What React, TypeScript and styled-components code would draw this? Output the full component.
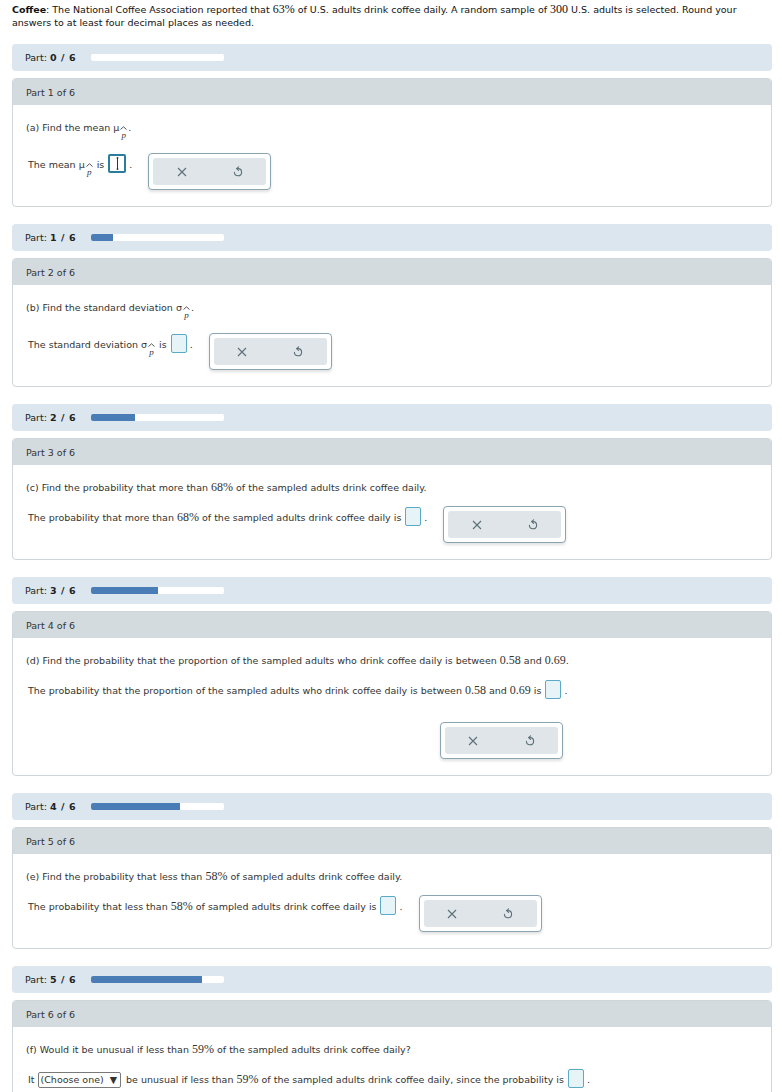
import React from 'react';
import styled, { createGlobalStyle } from 'styled-components';

const GlobalStyle = createGlobalStyle`
	body {
		margin: 0;
		background: #ffffff;
		font-family: 'DejaVu Sans', Verdana, sans-serif;
		font-size: 9.5px;
		color: #222222;
	}
`;

const Page = styled.div`
	padding: 3px 10px 0 12px;
`;

const Intro = styled.div`
	line-height: 13px;
	color: #111111;
	margin-bottom: 15px;
	b {
		font-weight: bold;
	}
`;

const Num = styled.span`
	font-family: 'Liberation Serif', 'Times New Roman', serif;
	font-size: 12px;
	line-height: 10px;
`;

const ProgressWrap = styled.div`
	height: 27px;
	background: #dbe6ef;
	border-radius: 4px;
	display: flex;
	align-items: center;
	padding-left: 13px;
	margin-bottom: 7px;
`;

const ProgressLabel = styled.div`
	min-width: 66px;
	color: #222222;
	b {
		font-weight: bold;
		letter-spacing: 0.6px;
	}
`;

const Track = styled.div`
	width: 133px;
	height: 7px;
	background: #ffffff;
	border-radius: 2px;
	overflow: hidden;
`;

const Fill = styled.div`
	height: 100%;
	background: #4a7db6;
`;

const Card = styled.div`
	border: 1px solid #cdd6da;
	border-radius: 4px;
	overflow: hidden;
	margin-bottom: 17px;
`;

const CardHead = styled.div`
	height: 26px;
	background: #d3dbde;
	display: flex;
	align-items: center;
	padding-left: 13px;
	color: #333333;
`;

const CardBody = styled.div`
	padding: 16px 13px 16px 13px;
`;

const Question = styled.div<{ sub?: boolean }>`
	height: ${(p) => (p.sub ? '21px' : '14px')};
	line-height: 14px;
	color: #333333;
	white-space: nowrap;
`;

const AnswerBlock = styled.div<{ wrap?: boolean }>`
	margin-top: 11px;
	padding-left: 2px;
	display: flex;
	flex-direction: ${(p) => (p.wrap ? 'column' : 'row')};
	align-items: flex-start;
`;

const AnswerLine = styled.div`
	display: flex;
	align-items: flex-start;
	color: #333333;
`;

const AnswerText = styled.span`
	margin-top: 5px;
	line-height: 14px;
	white-space: nowrap;
`;

const InputBox = styled.span<{ focused?: boolean }>`
	display: flex;
	align-items: center;
	justify-content: center;
	box-sizing: border-box;
	width: ${(p) => (p.focused ? '18px' : '16px')};
	height: 19px;
	margin: 1px 3px 0 4px;
	border: ${(p) => (p.focused ? '2px solid #2b7d9c' : '1px solid #5aa9c6')};
	background: ${(p) => (p.focused ? '#ffffff' : '#e6f4f8')};
	border-radius: 2px;
`;

const ActionBox = styled.div<{ offset?: number; below?: boolean }>`
	box-sizing: border-box;
	width: 123px;
	height: 37px;
	margin-left: ${(p) => p.offset ?? 16}px;
	margin-top: ${(p) => (p.below ? '23px' : '0')};
	border: 1px solid #8aa5b1;
	border-radius: 4px;
	background: #ffffff;
	padding: 4px;
	box-shadow: 0 2px 3px rgba(0, 0, 0, 0.12);
	display: flex;
`;

const ActionInner = styled.div`
	flex: 1;
	display: flex;
	background: #dfe5e8;
	border-radius: 3px;
`;

const ActionButton = styled.button`
	flex: 1;
	border: none;
	background: transparent;
	display: flex;
	align-items: center;
	justify-content: center;
	padding: 0;
	cursor: pointer;
`;

const MathVar = styled.span`
	font-family: 'DejaVu Sans', Verdana, sans-serif;
	white-space: nowrap;
`;

const SubStack = styled.span`
	display: inline-block;
	vertical-align: -7px;
	line-height: 8px;
	margin: 0 1px 0 1px;
	text-align: center;
	svg {
		display: block;
		margin: 0 auto 1px;
	}
`;

const SubP = styled.span`
	font-family: 'Liberation Serif', 'Times New Roman', serif;
	font-style: italic;
	font-size: 9px;
	line-height: 8px;
`;

const Select = styled.span`
	display: inline-flex;
	align-items: center;
	vertical-align: middle;
	height: 16px;
	line-height: 14px;
	box-sizing: border-box;
	border: 1px solid #7a7a7a;
	border-radius: 2px;
	padding: 0 3px 0 2px;
	margin: -2px 5px 0 3px;
	color: #333333;
	gap: 6px;
`;

const Hat = () => (
	<svg width='7' height='4' viewBox='0 0 7 4'>
		<polyline points='0.5,3.5 3.5,0.8 6.5,3.5' fill='none' stroke='#555' strokeWidth='1' />
	</svg>
);

const Hatted = ({ sym }: { sym: string }) => (
	<MathVar>
		{sym}
		<SubStack>
			<Hat />
			<SubP>p</SubP>
		</SubStack>
	</MathVar>
);

const ClearIcon = () => (
	<svg width='10' height='10' viewBox='0 0 10 10'>
		<path d='M1 1 L9 9 M9 1 L1 9' stroke='#5c7079' strokeWidth='1.1' fill='none' />
	</svg>
);

const UndoIcon = () => (
	<svg width='10' height='11' viewBox='0 0 10 11'>
		<path
			d='M4 2.6 H5 A3.6 3.6 0 1 1 1.4 6.3'
			stroke='#5c7079'
			strokeWidth='1.1'
			fill='none'
			strokeLinecap='round'
		/>
		<path
			d='M5.6 0.8 L3.6 2.6 L5.6 4.4'
			stroke='#5c7079'
			strokeWidth='1.1'
			fill='none'
			strokeLinecap='round'
			strokeLinejoin='round'
		/>
	</svg>
);

const Caret = () => (
	<svg width='5' height='13' viewBox='0 0 5 13'>
		<path d='M2.5 1 V12' stroke='#333' strokeWidth='1' />
		<circle cx='2.5' cy='1' r='0.9' fill='#333' />
		<circle cx='2.5' cy='12' r='0.9' fill='#333' />
	</svg>
);

const Actions = ({ offset, below }: { offset?: number; below?: boolean }) => (
	<ActionBox offset={offset} below={below}>
		<ActionInner>
			<ActionButton aria-label='clear'>
				<ClearIcon />
			</ActionButton>
			<ActionButton aria-label='undo'>
				<UndoIcon />
			</ActionButton>
		</ActionInner>
	</ActionBox>
);

const Progress = ({ done }: { done: number }) => (
	<ProgressWrap>
		<ProgressLabel>
			Part: <b>{done} / 6</b>
		</ProgressLabel>
		<Track>
			<Fill style={{ width: `${(done / 6) * 100}%` }} />
		</Track>
	</ProgressWrap>
);

type PartProps = {
	index: number;
	question: React.ReactNode;
	answer: React.ReactNode;
	wrap?: boolean;
	focused?: boolean;
	sub?: boolean;
};

const Part = ({ index, question, answer, wrap, focused, sub }: PartProps) => (
	<>
		<Progress done={index - 1} />
		<Card>
			<CardHead>Part {index} of 6</CardHead>
			<CardBody>
				<Question sub={sub}>{question}</Question>
				<AnswerBlock wrap={wrap}>
					<AnswerLine>
						<AnswerText>{answer}</AnswerText>
						<InputBox focused={focused}>{focused && <Caret />}</InputBox>
						<AnswerText>.</AnswerText>
					</AnswerLine>
					<Actions offset={wrap ? 412 : 16} below={wrap} />
				</AnswerBlock>
			</CardBody>
		</Card>
	</>
);

const App = () => {
	return (
		<>
			<GlobalStyle />
			<Page>
				<Intro>
					<b>Coffee</b>: The National Coffee Association reported that <Num>63%</Num> of U.S. adults
					drink coffee daily. A random sample of <Num>300</Num> U.S. adults is selected. Round your
					answers to at least four decimal places as needed.
				</Intro>
				<Part
					index={1}
					focused
					sub
					question={
						<>
							(a) Find the mean <Hatted sym='μ' />.
						</>
					}
					answer={
						<>
							The mean <Hatted sym='μ' /> is
						</>
					}
				/>
				<Part
					index={2}
					sub
					question={
						<>
							(b) Find the standard deviation <Hatted sym='σ' />.
						</>
					}
					answer={
						<>
							The standard deviation <Hatted sym='σ' /> is
						</>
					}
				/>
				<Part
					index={3}
					question={
						<>
							(c) Find the probability that more than <Num>68%</Num> of the sampled adults drink
							coffee daily.
						</>
					}
					answer={
						<>
							The probability that more than <Num>68%</Num> of the sampled adults drink coffee daily
							is
						</>
					}
				/>
				<Part
					index={4}
					wrap
					question={
						<>
							(d) Find the probability that the proportion of the sampled adults who drink coffee
							daily is between <Num>0.58</Num> and <Num>0.69</Num>.
						</>
					}
					answer={
						<>
							The probability that the proportion of the sampled adults who drink coffee daily is
							between <Num>0.58</Num> and <Num>0.69</Num> is
						</>
					}
				/>
				<Part
					index={5}
					question={
						<>
							(e) Find the probability that less than <Num>58%</Num> of sampled adults drink coffee
							daily.
						</>
					}
					answer={
						<>
							The probability that less than <Num>58%</Num> of sampled adults drink coffee daily is
						</>
					}
				/>
				<Part
					index={6}
					wrap
					question={
						<>
							(f) Would it be unusual if less than <Num>59%</Num> of the sampled adults drink coffee
							daily?
						</>
					}
					answer={
						<>
							It
							<Select>
								(Choose one) <span>▼</span>
							</Select>
							be unusual if less than <Num>59%</Num> of the sampled adults drink coffee daily, since
							the probability is
						</>
					}
				/>
			</Page>
		</>
	);
};

export default App;
